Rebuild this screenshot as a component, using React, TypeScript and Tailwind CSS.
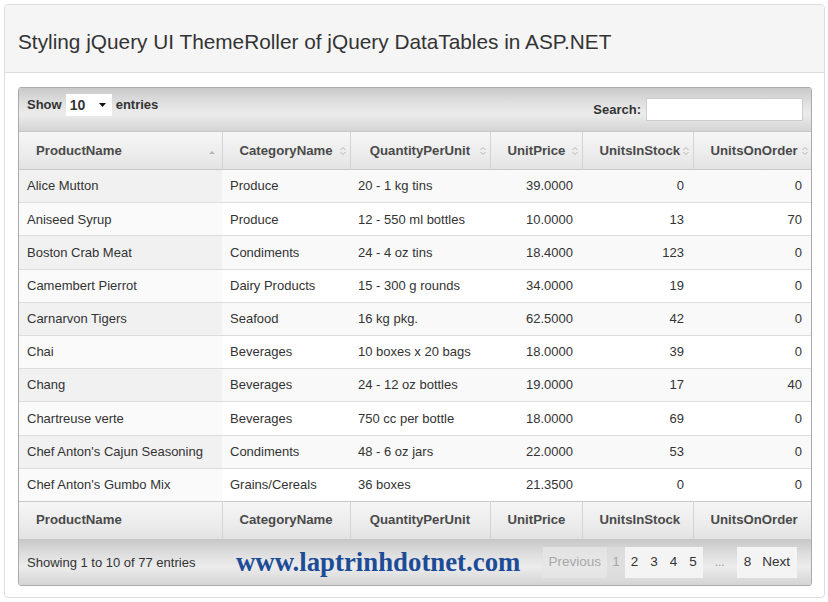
import React from 'react';

type Row = [string, string, string, string, number, number];

const rows: Row[] = [
  ['Alice Mutton', 'Produce', '20 - 1 kg tins', '39.0000', 0, 0],
  ['Aniseed Syrup', 'Produce', '12 - 550 ml bottles', '10.0000', 13, 70],
  ['Boston Crab Meat', 'Condiments', '24 - 4 oz tins', '18.4000', 123, 0],
  ['Camembert Pierrot', 'Dairy Products', '15 - 300 g rounds', '34.0000', 19, 0],
  ['Carnarvon Tigers', 'Seafood', '16 kg pkg.', '62.5000', 42, 0],
  ['Chai', 'Beverages', '10 boxes x 20 bags', '18.0000', 39, 0],
  ['Chang', 'Beverages', '24 - 12 oz bottles', '19.0000', 17, 40],
  ['Chartreuse verte', 'Beverages', '750 cc per bottle', '18.0000', 69, 0],
  ["Chef Anton's Cajun Seasoning", 'Condiments', '48 - 6 oz jars', '22.0000', 53, 0],
  ["Chef Anton's Gumbo Mix", 'Grains/Cereals', '36 boxes', '21.3500', 0, 0],
];

const columns = [
  { name: 'ProductName', w: 'w-[203px]' },
  { name: 'CategoryName', w: 'w-[128px]' },
  { name: 'QuantityPerUnit', w: 'w-[140px]' },
  { name: 'UnitPrice', w: 'w-[92px]' },
  { name: 'UnitsInStock', w: 'w-[111px]' },
  { name: 'UnitsOnOrder', w: 'w-[119px]' },
];

const SortIcon: React.FC<{ asc?: boolean }> = ({ asc }) =>
  asc ? (
    <svg width="8" height="8" viewBox="0 0 8 8" className="absolute right-[6px] top-[16px]">
      <path d="M1 6 L4 3 L7 6 Z" fill="#b5b5b5" />
    </svg>
  ) : (
    <svg width="8" height="10" viewBox="0 0 8 10" className="absolute right-[3px] top-[14px]">
      <path d="M1.5 4 L4 1.5 L6.5 4" fill="none" stroke="#b5b5b5" strokeWidth="1" />
      <path d="M1.5 6 L4 8.5 L6.5 6" fill="none" stroke="#b5b5b5" strokeWidth="1" />
    </svg>
  );

const HeaderRow: React.FC<{ sortable?: boolean }> = ({ sortable }) => (
  <tr className="h-[38px] bg-[linear-gradient(#f6f6f6,#ececec_60%,#e2e2e2)]">
    {columns.map((c, i) => (
      <th
        key={c.name}
        className={`${c.w} relative border-l border-[#d3d3d3] first:border-l-0 px-[17px] font-bold text-[13.2px] text-[#4a4a4a] ${i === 0 ? 'text-left' : 'text-center'}`}
      >
        {c.name}
        {sortable && <SortIcon asc={i === 0} />}
      </th>
    ))}
  </tr>
);

const toolbarBg = 'bg-[linear-gradient(#c9c9c9,#e0e0e0_35%,#ececec_60%,#d4d4d4)]';

export default function App() {
  return (
    <div className="w-[828px] h-[602px] bg-white p-[4px] font-['Liberation_Sans',Arial,sans-serif] text-[#333]">
      <div className="h-[594px] w-[821px] border border-[#ddd] rounded-[4px] overflow-hidden">
        <div className="h-[68px] bg-[#f5f5f5] border-b border-[#ddd] flex items-center px-[13px] pt-[7px]">
          <h1 className="text-[20.8px] text-[#333]">Styling jQuery UI ThemeRoller of jQuery DataTables in ASP.NET</h1>
        </div>
        <div className="px-[13px] pt-[14px]">
          <div className="w-[794px] border border-[#aaa] rounded-[3px] overflow-hidden">
            <div className={`h-[43px] ${toolbarBg} flex items-center justify-between px-[8px] text-[13px] font-bold text-[#333]`}>
              <div className="flex items-center gap-[4px] -mt-[9px]">
                <span>Show</span>
                <div className="w-[46px] h-[22px] bg-white flex items-center justify-between pl-[4px] pr-[6px] font-bold text-[14px]">
                  <span>10</span>
                  <svg width="7" height="4" viewBox="0 0 7 4">
                    <path d="M0 0 H7 L3.5 4 Z" fill="#111" />
                  </svg>
                </div>
                <span>entries</span>
              </div>
              <div className="flex items-center gap-[5px]">
                <span>Search:</span>
                <div className="w-[157px] h-[23px] bg-white border border-[#ccc]" />
              </div>
            </div>
            <table className="w-[793px] table-fixed border-collapse">
              <thead className="border-y border-[#c8c8c8]">
                <HeaderRow sortable />
              </thead>
              <tbody className="text-[13px] text-[#333]">
                {rows.map((r, i) => (
                  <tr
                    key={r[0]}
                    className={`h-[33.2px] border-b border-[#ddd] last:border-b-0 ${i % 2 === 0 ? 'bg-[#f9f9f9]' : 'bg-white'}`}
                  >
                    <td className={`px-[8px] whitespace-nowrap ${i % 2 === 0 ? 'bg-[#f1f1f1]' : 'bg-[#fafafa]'}`}>{r[0]}</td>
                    <td className="px-[8px]">{r[1]}</td>
                    <td className="px-[8px]">{r[2]}</td>
                    <td className="px-[9px] text-right">{r[3]}</td>
                    <td className="px-[9px] text-right">{r[4]}</td>
                    <td className="px-[9px] text-right pr-[10px]">{r[5]}</td>
                  </tr>
                ))}
              </tbody>
              <tfoot className="border-y border-[#c8c8c8]">
                <HeaderRow />
              </tfoot>
            </table>
            <div className={`h-[45px] ${toolbarBg} flex items-center px-[8px] text-[13px] text-[#333]`}>
              <span className="w-[209px]">Showing 1 to 10 of 77 entries</span>
              <span className="font-['Liberation_Serif',Georgia,serif] font-bold text-[26.8px] text-[#1d4c97] leading-none">
                www.laptrinhdotnet.com
              </span>
              <div className="ml-auto flex items-center h-[31px] text-[13.5px] mr-[6px]">
                <span className="h-full flex items-center px-[6px] bg-[#e6e6e6]/80 text-[#a8a8a8]">Previous</span>
                <span className="h-full flex items-center px-[5px] bg-[#dcdcdc]/80 text-[#a8a8a8]">1</span>
                <span className="h-full flex items-center gap-[12px] px-[6px] bg-[#f4f4f4]">
                  <span>2</span>
                  <span>3</span>
                  <span>4</span>
                  <span>5</span>
                </span>
                <span className="h-full flex items-center px-[12px] text-[#999] text-[12px]">...</span>
                <span className="h-full flex items-center gap-[11px] px-[7px] bg-[#f4f4f4]">
                  <span>8</span>
                  <span>Next</span>
                </span>
              </div>
            </div>
          </div>
        </div>
      </div>
    </div>
  );
}
